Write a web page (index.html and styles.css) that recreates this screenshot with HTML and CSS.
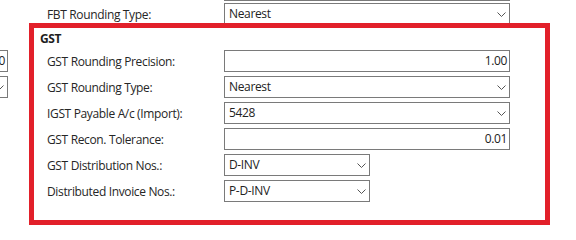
FILE: index.html
```html
<!DOCTYPE html>
<html>
<head>
<meta charset="utf-8">
<link rel="stylesheet" href="styles.css">
</head>
<body>
<div class="page">
  <div class="side">
    <div class="side-inner">
      <div class="box num">0</div>
      <div class="box select"><svg class="chev" viewBox="0 0 9 5" width="9" height="5"><polyline points="0.5,0.5 4.5,4.5 8.5,0.5"/></svg></div>
    </div>
  </div>
  <div class="main">
    <div class="row prev">
      <span class="label"></span>
      <div class="box wide"></div>
    </div>
    <div class="row">
      <span class="label">FBT Rounding Type:</span>
      <div class="box wide select">Nearest<svg class="chev" viewBox="0 0 9 5" width="9" height="5"><polyline points="0.5,0.5 4.5,4.5 8.5,0.5"/></svg></div>
    </div>
    <div class="heading">GST</div>
    <div class="row">
      <span class="label">GST Rounding Precision:</span>
      <div class="box wide num">1.00</div>
    </div>
    <div class="row">
      <span class="label">GST Rounding Type:</span>
      <div class="box wide select">Nearest<svg class="chev" viewBox="0 0 9 5" width="9" height="5"><polyline points="0.5,0.5 4.5,4.5 8.5,0.5"/></svg></div>
    </div>
    <div class="row">
      <span class="label">IGST Payable A/c (Import):</span>
      <div class="box wide select">5428<svg class="chev" viewBox="0 0 9 5" width="9" height="5"><polyline points="0.5,0.5 4.5,4.5 8.5,0.5"/></svg></div>
    </div>
    <div class="row">
      <span class="label">GST Recon. Tolerance:</span>
      <div class="box wide num">0.01</div>
    </div>
    <div class="row">
      <span class="label">GST Distribution Nos.:</span>
      <div class="box short select">D-INV<svg class="chev" viewBox="0 0 9 5" width="9" height="5"><polyline points="0.5,0.5 4.5,4.5 8.5,0.5"/></svg></div>
    </div>
    <div class="row">
      <span class="label">Distributed Invoice Nos.:</span>
      <div class="box short select">P-D-INV<svg class="chev" viewBox="0 0 9 5" width="9" height="5"><polyline points="0.5,0.5 4.5,4.5 8.5,0.5"/></svg></div>
    </div>
  </div>
  <div class="highlight"></div>
</div>
</body>
</html>
```
FILE: styles.css
```css
html, body {
  margin: 0;
  padding: 0;
  background: #ffffff;
}
body {
  width: 576px;
  height: 236px;
  overflow: hidden;
  font-family: "Open Sans", "Noto Sans", "Liberation Sans", sans-serif;
  font-size: 12px;
  letter-spacing: -0.35px;
  color: #262626;
}
.page {
  position: relative;
  display: flex;
  height: 236px;
}
.side {
  width: 8px;
  overflow: hidden;
  flex: none;
}
.side-inner {
  display: flex;
  flex-direction: column;
  gap: 4px;
  padding-top: 50px;
  margin-left: -72px;
  width: 80px;
}
.main {
  padding-left: 39px;
  display: flex;
  flex-direction: column;
}
.row {
  display: flex;
  align-items: center;
  height: 22px;
  margin-bottom: 4px;
}
.row.prev {
  margin-top: -21px;
  margin-bottom: 2px;
}
.label {
  width: 177px;
  flex: none;
  white-space: nowrap;
}
.heading {
  margin-left: -7px;
  margin-top: -4px;
  height: 21px;
  line-height: 20px;
  padding-top: 4px;
  font-weight: 700;
  color: #1e1e1e;
}
.box {
  position: relative;
  box-sizing: border-box;
  height: 22px;
  border: 1px solid #7a7a7a;
  background: #fff;
  padding: 0 4px;
  line-height: 20px;
  color: #222;
  white-space: nowrap;
}
.side .box { width: 80px; }
.wide { width: 286px; }
.short { width: 146px; }
.num {
  text-align: right;
  padding-right: 2px;
}
.chev {
  position: absolute;
  right: 3px;
  top: 8px;
  fill: none;
  stroke: #555;
  stroke-width: 1;
}
.highlight {
  position: absolute;
  left: 29px;
  top: 23px;
  width: 521px;
  height: 202px;
  box-sizing: border-box;
  border: 5px solid #e2202a;
  pointer-events: none;
}
```
